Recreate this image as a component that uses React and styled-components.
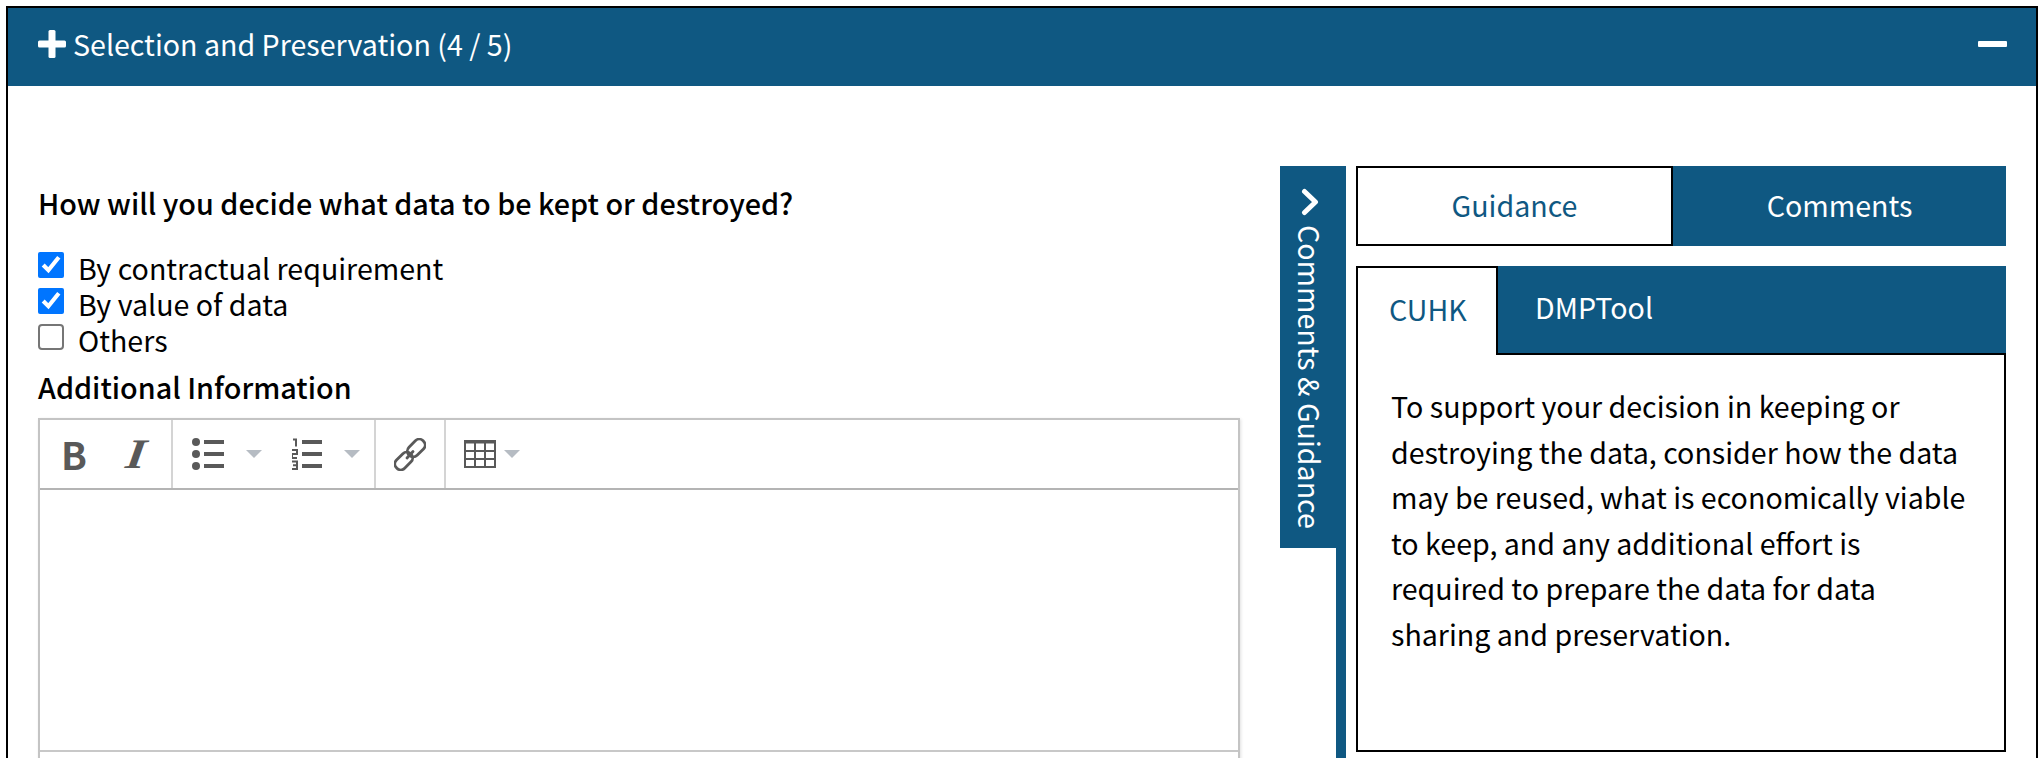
import React from 'react';
import styled, { createGlobalStyle } from 'styled-components';

const blue = '#0f5882';
const font = '"Noto Sans CJK SC", "Noto Sans", sans-serif';

const GlobalStyle = createGlobalStyle`
  html, body {
    margin: 0;
    height: 758px;
    overflow: hidden;
    background: #fff;
  }
  body {
    padding: 6px 6px 0;
    box-sizing: border-box;
    font-family: ${font};
    font-size: 28.6px;
    color: #000;
  }
  * { box-sizing: border-box; }
`;

const Panel = styled.section`
  border: 2px solid #000;
  border-bottom: 0;
  height: 752px;
  overflow: hidden;
`;

const Header = styled.header`
  background: ${blue};
  color: #fff;
  height: 78px;
  display: flex;
  align-items: center;
  justify-content: space-between;
  padding: 0 29px 6px 30px;
`;

const HeaderTitle = styled.div`
  display: flex;
  align-items: center;
  gap: 7px;
  line-height: 1;
`;

const Body = styled.div`
  display: flex;
  align-items: stretch;
  height: 674px;
  padding: 80px 30px 0;
`;

const Form = styled.form`
  width: 1202px;
  flex: none;
  margin-right: 40px;
  padding-top: 17px;
`;

const Question = styled.div`
  font-weight: 500;
  font-size: 28.75px;
  line-height: 40px;
  margin: 0 0 26px;
`;

const Option = styled.label`
  display: flex;
  align-items: center;
  height: 36px;
  line-height: 36px;
  padding-top: 2px;
`;

const Check = styled.input.attrs({ type: 'checkbox' })`
  width: 26px;
  height: 26px;
  margin: 0 14px 0 0;
  flex: none;
  position: relative;
  top: -3px;

  &:not(:checked) {
    appearance: none;
    background: #fff;
    border: 2px solid #767676;
    border-radius: 4px;
  }
`;

const FieldLabel = styled(Question)`
  margin: 10px 0 11px;
`;

const Editor = styled.div`
  border: 2px solid #c4c4c4;
  border-bottom: 0;
  height: 400px;
  box-shadow: 1px 1px 3px rgba(0, 0, 0, 0.12);
`;

const Toolbar = styled.div`
  display: flex;
  height: 70px;
  border-bottom: 2px solid #b4b4b4;
`;

const ToolGroup = styled.div`
  display: flex;
  align-items: center;
  width: ${p => p.$w}px;
  padding-left: ${p => p.$pad}px;
  border-right: ${p => (p.$last ? 0 : '2px solid #d4d4d4')};
  color: #595959;
`;

const EditArea = styled.div`
  height: 262px;
  border-bottom: 2px solid #c8c8c8;
`;

const BoldGlyph = styled.span`
  font-weight: 700;
  font-size: 38px;
  line-height: 1;
  width: 67px;
`;

const ItalicGlyph = styled.span`
  display: inline-block;
  font-family: "Liberation Serif", serif;
  font-weight: 700;
  font-style: italic;
  font-size: 42px;
  line-height: 1;
  transform: skewX(-8deg) scaleX(1.2);
`;

const Caret = styled.span`
  width: 0;
  height: 0;
  margin-left: ${p => p.$gap}px;
  margin-right: ${p => p.$after || 0}px;
  border-left: 8px solid transparent;
  border-right: 8px solid transparent;
  border-top: 8px solid #b6bcc3;
`;

const SideTab = styled.div`
  flex: none;
  width: 66px;
  margin-right: 10px;
  border-right: 10px solid ${blue};
`;

const SideTabHead = styled.div`
  background: ${blue};
  color: #fff;
  width: 66px;
  height: 382px;
  display: flex;
  flex-direction: column;
  align-items: center;
  padding: 22px 6px 0 0;
`;

const SideLabel = styled.span`
  writing-mode: vertical-rl;
  line-height: 1;
  margin-top: 9px;
  white-space: nowrap;
`;

const Guidance = styled.aside`
  flex: 1;
  display: flex;
  flex-direction: column;
`;

const Switch = styled.div`
  display: flex;
  height: 80px;
  margin-bottom: 20px;
`;

const SwitchItem = styled.div`
  display: flex;
  align-items: center;
  justify-content: center;
  width: ${p => p.$w}px;
  padding-bottom: 4px;
  color: ${p => (p.$active ? blue : '#fff')};
  background: ${p => (p.$active ? '#fff' : blue)};
  border: ${p => (p.$active ? '2px solid #000' : 0)};
`;

const Tabs = styled.div`
  display: flex;
  height: 89px;
  background: ${blue};
  border-bottom: 2px solid #000;
`;

const Tab = styled.div`
  display: flex;
  align-items: center;
  color: ${p => (p.$active ? blue : '#fff')};
  background: ${p => (p.$active ? '#fff' : 'transparent')};
  width: ${p => p.$w}px;
  padding: 0 0 6px ${p => p.$pad}px;
  ${p => p.$active && `
    border: 2px solid #000;
    border-bottom: 0;
    height: 89px;
  `}
`;

const Note = styled.div`
  height: 397px;
  border: 2px solid #000;
  border-top: 0;
  padding: 28px 24px 0 33px;
  line-height: 45.6px;
`;

const PlusIcon = () => (
  <svg width="28" height="28" viewBox="0 0 28 28">
    <rect x="0" y="10.5" width="28" height="7" rx="1.5" fill="#fff" />
    <rect x="10.5" y="0" width="7" height="28" rx="1.5" fill="#fff" />
  </svg>
);

const MinusIcon = () => (
  <svg width="29" height="6" viewBox="0 0 29 6">
    <rect width="29" height="6" rx="1" fill="#fff" />
  </svg>
);

const ChevronIcon = () => (
  <svg width="18" height="28" viewBox="0 0 18 28" fill="none" stroke="#fff" strokeWidth="5" strokeLinecap="round" strokeLinejoin="round">
    <path d="M3.5 3.5L14.5 14L3.5 24.5" />
  </svg>
);

const BulletIcon = () => (
  <svg width="32" height="32" viewBox="0 0 32 32" fill="#595959">
    <circle cx="4" cy="4" r="4" />
    <circle cx="4" cy="16" r="4" />
    <circle cx="4" cy="28" r="4" />
    <rect x="12" y="2" width="20" height="4" />
    <rect x="12" y="14" width="20" height="4" />
    <rect x="12" y="26" width="20" height="4" />
  </svg>
);

const NumberIcon = () => (
  <svg width="30" height="32" viewBox="0 0 30 32" fill="none" stroke="#595959" strokeWidth="2">
    <path d="M1 1.5h3v7" />
    <path d="M0 12h5v4h-5v4h5" />
    <path d="M0 23.5h5v3.7h-4M5 27.2v3.8h-5" />
    <g fill="#595959" stroke="none">
      <rect x="10" y="2" width="20" height="4" />
      <rect x="10" y="14" width="20" height="4" />
      <rect x="10" y="26" width="20" height="4" />
    </g>
  </svg>
);

const LinkIcon = () => (
  <svg width="32" height="33" viewBox="0 0 32 33" fill="none" stroke="#595959" strokeWidth="2.8" strokeLinecap="round">
    <rect x="16.5" y="0" width="11.5" height="20" rx="5.5" transform="rotate(45 22.2 10)" />
    <rect x="4" y="13" width="11.5" height="20" rx="5.5" transform="rotate(45 9.8 23)" />
    <path d="M13 20L19 13.5" />
  </svg>
);

const TableIcon = () => (
  <svg width="32" height="28" viewBox="0 0 32 28" fill="none" stroke="#595959" strokeWidth="2">
    <rect x="1" y="1" width="30" height="26" />
    <path d="M1 2.5h30M1 11h30M1 19h30M11 1v26M21 1v26" />
  </svg>
);

const App = () => (
  <>
    <GlobalStyle />
    <Panel>
      <Header>
        <HeaderTitle>
          <PlusIcon />
          Selection and Preservation (4 / 5)
        </HeaderTitle>
        <MinusIcon />
      </Header>
      <Body>
        <Form>
          <Question>How will you decide what data to be kept or destroyed?</Question>
          <Option><Check defaultChecked />By contractual requirement</Option>
          <Option><Check defaultChecked />By value of data</Option>
          <Option><Check />Others</Option>
          <FieldLabel>Additional Information</FieldLabel>
          <Editor>
            <Toolbar>
              <ToolGroup $w={133} $pad={21}>
                <BoldGlyph>B</BoldGlyph>
                <ItalicGlyph>I</ItalicGlyph>
              </ToolGroup>
              <ToolGroup $w={203} $pad={19}>
                <BulletIcon />
                <Caret $gap={22} $after={30} />
                <NumberIcon />
                <Caret $gap={22} />
              </ToolGroup>
              <ToolGroup $w={70} $pad={18}>
                <LinkIcon />
              </ToolGroup>
              <ToolGroup $last $pad={18}>
                <TableIcon />
                <Caret $gap={8} />
              </ToolGroup>
            </Toolbar>
            <EditArea />
          </Editor>
        </Form>
        <SideTab>
          <SideTabHead>
            <ChevronIcon />
            <SideLabel>Comments &amp; Guidance</SideLabel>
          </SideTabHead>
        </SideTab>
        <Guidance>
          <Switch>
            <SwitchItem $active $w={317}>Guidance</SwitchItem>
            <SwitchItem $w={333}>Comments</SwitchItem>
          </Switch>
          <Tabs>
            <Tab $active $w={142} $pad={31}>CUHK</Tab>
            <Tab $pad={37}>DMPTool</Tab>
          </Tabs>
          <Note>
            To support your decision in keeping or destroying the data, consider how the data may be reused, what is economically viable to keep, and any additional effort is required to prepare the data for data sharing and preservation.
          </Note>
        </Guidance>
      </Body>
    </Panel>
  </>
);

export default App;
